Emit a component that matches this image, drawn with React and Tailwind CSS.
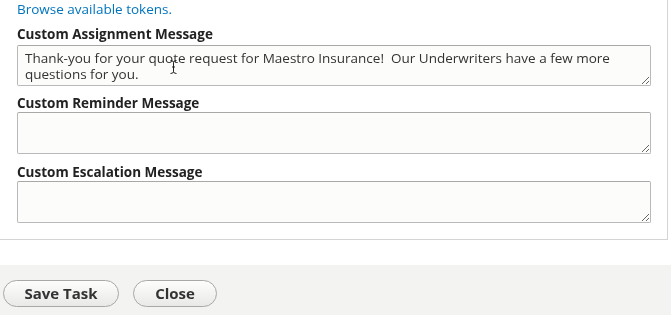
export default function App() {
  const ta = "block w-[634px] resize-y rounded-[2px] border border-[#b9b9b9] border-t-[#a8a8a8] bg-[#fcfcfa] px-[7px] py-[4px] text-[13.5px] leading-[16px] text-[#333] outline-none";
  const label = "block text-[13.5px] font-bold leading-[17px] text-[#222]";
  return (
    <div className="relative h-[315px] w-[671px] overflow-hidden bg-white" style={{ fontFamily: '"Open Sans", "Liberation Sans", sans-serif' }}>
      <div className="h-[240px] w-[668px] border-r border-b border-[#d4d4d4] pl-[17px] pt-[1px]">
        <a className="block text-[13.5px] leading-[17px] text-[#0074bd]">Browse available tokens.</a>
        <label className={`${label} mt-[8px]`}>Custom Assignment Message</label>
        <textarea className={`${ta} mt-[2px] h-[41px]`} defaultValue={"Thank-you for your quote request for Maestro Insurance!  Our Underwriters have a few more questions for you."} />
        <label className={`${label} mt-[9px]`}>Custom Reminder Message</label>
        <textarea className={`${ta} mt-0 h-[42px]`} defaultValue="" />
        <label className={`${label} mt-[10px]`}>Custom Escalation Message</label>
        <textarea className={`${ta} mt-0 h-[42px]`} defaultValue="" />
      </div>
      <div className="mt-[25px] flex h-[50px] items-start gap-[14px] bg-[#f3f3f1] pl-[3px] pt-[15px]">
        <button className="h-[27px] w-[116px] rounded-full border border-[#a8a8a8] bg-gradient-to-b from-[#fdfdfc] to-[#e9e9e7] text-[15px] font-bold leading-[25px] text-[#333]">Save Task</button>
        <button className="h-[27px] w-[84px] rounded-full border border-[#a8a8a8] bg-gradient-to-b from-[#fdfdfc] to-[#e9e9e7] text-[15px] font-bold leading-[25px] text-[#333]">Close</button>
      </div>
      <svg className="absolute left-[169px] top-[60px]" width="9" height="14" viewBox="0 0 9 14">
        <path d="M1.5 0.5 Q4.5 0.5 4.5 2.5 Q4.5 0.5 7.5 0.5 M4.5 2.5 V11.5 M1.5 13.5 Q4.5 13.5 4.5 11.5 Q4.5 13.5 7.5 13.5 M3 7 H6" stroke="#222" strokeWidth="1" fill="none" />
      </svg>
    </div>
  );
}
